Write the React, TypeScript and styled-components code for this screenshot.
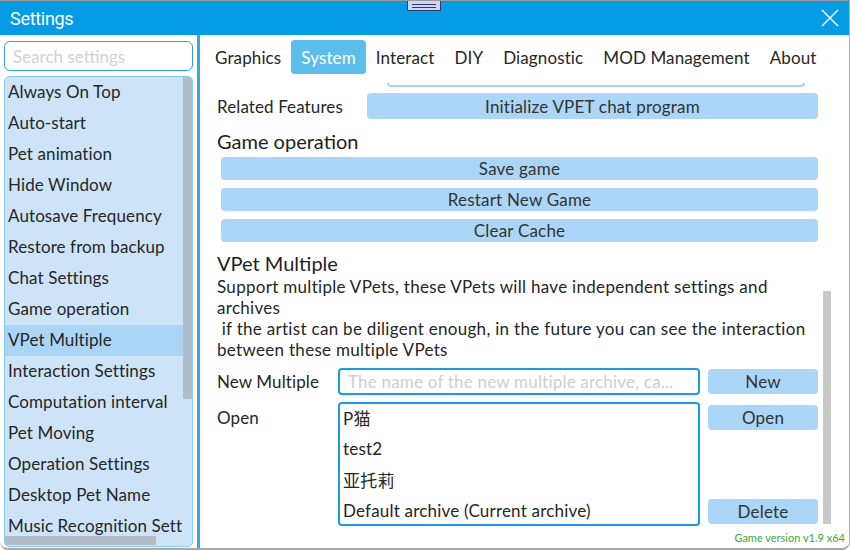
import React from 'react';
import styled, { createGlobalStyle } from 'styled-components';

const GlobalStyle = createGlobalStyle`
  html, body {
    margin: 0;
    padding: 0;
    background: #ffffff;
  }
  body {
    font-family: Lato, "Noto Sans CJK SC", sans-serif;
    color: #222;
  }
`;

const sideItems = [
  'Always On Top',
  'Auto-start',
  'Pet animation',
  'Hide Window',
  'Autosave Frequency',
  'Restore from backup',
  'Chat Settings',
  'Game operation',
  'VPet Multiple',
  'Interaction Settings',
  'Computation interval',
  'Pet Moving',
  'Operation Settings',
  'Desktop Pet Name',
  'Music Recognition Settings',
];

const tabs = ['Graphics', 'System', 'Interact', 'DIY', 'Diagnostic', 'MOD Management', 'About'];

const archives = ['P猫', 'test2', '亚托莉', 'Default archive (Current archive)'];

const Window = styled.div`
  position: relative;
  width: 850px;
  height: 550px;
  box-sizing: border-box;
  display: flex;
  flex-direction: column;
  background: #fff;
  border-top: 1px solid #9a9a9a;
  border-right: 1px solid #b0b0b0;
  border-bottom: 2px solid #a8a8a8;
  border-radius: 0 0 8px 8px;
  overflow: hidden;
`;

const TitleBar = styled.div`
  height: 34px;
  flex: none;
  display: flex;
  align-items: center;
  justify-content: space-between;
  padding: 0 10px;
  background: #059ce5;
  color: #fff;
`;

const Title = styled.span`
  font-family: Roboto, sans-serif;
  font-size: 18px;
  letter-spacing: -0.3px;
`;

const DragHandle = styled.div`
  position: absolute;
  top: -1px;
  left: 407px;
  width: 34px;
  height: 11px;
  box-sizing: border-box;
  background: #ccd5f2;
  border: 1px solid #2d3b6e;
  display: flex;
  flex-direction: column;
  align-items: center;
  justify-content: center;
  gap: 2px;
  &::before,
  &::after {
    content: '';
    width: 24px;
    height: 1px;
    background: #2d3b6e;
  }
`;

const Body = styled.div`
  flex: 1;
  display: flex;
  min-height: 0;
`;

const Sidebar = styled.div`
  width: 197px;
  flex: none;
  box-sizing: border-box;
  padding: 6px 4px 1px 4px;
  display: flex;
  flex-direction: column;
  gap: 5px;
`;

const Search = styled.div`
  height: 30px;
  flex: none;
  box-sizing: border-box;
  border: 1px solid #2fa0e2;
  border-radius: 6px;
  padding: 0 8px;
  display: flex;
  align-items: center;
  font-size: 17px;
  color: #d2d2d2;
`;

const ListBox = styled.div`
  flex: 1;
  min-height: 0;
  box-sizing: border-box;
  border: 1px solid #86cbf1;
  border-radius: 5px;
  background: #cde4f8;
  display: grid;
  grid-template-columns: 1fr 9px;
  grid-template-rows: 1fr 10px;
  overflow: hidden;
`;

const ListItems = styled.div`
  overflow: hidden;
  display: flex;
  flex-direction: column;
`;

const SideItem = styled.div<{ $active?: boolean }>`
  height: 31px;
  flex: none;
  display: flex;
  align-items: center;
  padding: 0 0 2px 3px;
  box-sizing: border-box;
  font-size: 17px;
  letter-spacing: 0.1px;
  white-space: nowrap;
  color: #262626;
  background: ${(p) => (p.$active ? '#aad5f6' : 'transparent')};
`;

const VTrack = styled.div`
  display: flex;
  flex-direction: column;
`;

const VThumb = styled.div`
  height: 322px;
  background: #b3bdc7;
`;

const HTrack = styled.div`
  grid-column: 1 / 3;
  display: flex;
  align-items: flex-start;
`;

const HThumb = styled.div`
  width: 151px;
  height: 9px;
  background: #b3bdc7;
`;

const Divider = styled.div`
  width: 3px;
  flex: none;
  background: #3ea6df;
`;

const Main = styled.div`
  flex: 1;
  display: flex;
  flex-direction: column;
  min-width: 0;
`;

const TabRow = styled.div`
  display: flex;
  padding: 5px 0 0 5px;
  height: 34px;
  flex: none;
`;

const Tab = styled.div<{ $active?: boolean }>`
  padding: 0 10px;
  display: flex;
  align-items: center;
  font-size: 17px;
  letter-spacing: 0.12px;
  border-radius: 4px;
  color: ${(p) => (p.$active ? '#fff' : '#262626')};
  background: ${(p) => (p.$active ? '#5cbeec' : 'transparent')};
`;

const ContentRow = styled.div`
  flex: 1;
  display: flex;
  min-height: 0;
`;

const Content = styled.div`
  width: 601px;
  margin-left: 17px;
  display: flex;
  flex-direction: column;
  overflow: hidden;
`;

const PartialCard = styled.div`
  height: 4px;
  flex: none;
  margin: 9px 13px 0 170px;
  box-sizing: border-box;
  border: 2px solid #a9d4f5;
  border-top: none;
  border-radius: 0 0 6px 6px;
`;

const Row = styled.div<{ $top: number; $align?: string }>`
  display: flex;
  align-items: ${(p) => p.$align || 'center'};
  margin-top: ${(p) => p.$top}px;
  flex: none;
`;

const Label = styled.div<{ $width: number; $line?: number }>`
  width: ${(p) => p.$width}px;
  flex: none;
  font-size: 17px;
  letter-spacing: 0.1px;
  line-height: ${(p) => (p.$line ? `${p.$line}px` : 'normal')};
  color: #262626;
`;

const ActionButton = styled.div<{ $height?: number; $fill?: boolean }>`
  height: ${(p) => p.$height || 23}px;
  flex: ${(p) => (p.$fill ? '1' : 'none')};
  display: flex;
  align-items: center;
  justify-content: center;
  border-radius: 4px;
  background: #acd6f7;
  color: #333;
  font-size: 17px;
  letter-spacing: 0.2px;
`;

const Heading = styled.div<{ $top: number }>`
  margin-top: ${(p) => p.$top}px;
  font-size: 20px;
  line-height: 24px;
  color: #1e1e1e;
  flex: none;
`;

const ButtonStack = styled.div`
  display: flex;
  flex-direction: column;
  gap: 8px;
  margin-top: 4px;
  margin-left: 4px;
`;

const Paragraph = styled.div`
  width: 601px;
  font-size: 17px;
  letter-spacing: 0.3px;
  line-height: 21px;
  white-space: pre-wrap;
  color: #262626;
  margin-top: 1px;
  flex: none;
`;

const TextInput = styled.div`
  width: 362px;
  height: 27px;
  flex: none;
  box-sizing: border-box;
  border: 2px solid #1b9be3;
  border-radius: 4px;
  padding: 0 8px;
  display: flex;
  align-items: center;
  font-size: 17px;
  letter-spacing: 0.2px;
  color: #cfcfcf;
  white-space: nowrap;
`;

const SideButtons = styled.div`
  width: 110px;
  margin-left: 8px;
  flex: none;
  display: flex;
  flex-direction: column;
  justify-content: space-between;
  align-self: stretch;
  padding: 3px 0 2px;
`;

const ArchiveList = styled.div`
  width: 362px;
  height: 124px;
  flex: none;
  box-sizing: border-box;
  border: 2px solid #1b9be3;
  border-radius: 4px;
  display: flex;
  flex-direction: column;
`;

const ArchiveItem = styled.div`
  height: 31px;
  flex: none;
  box-sizing: border-box;
  display: flex;
  align-items: center;
  padding: 0 0 4px 3px;
  font-size: 17px;
  letter-spacing: 0.2px;
  color: #262626;
`;

const ScrollTrack = styled.div`
  width: 8px;
  margin-left: 5px;
  flex: none;
  display: flex;
  flex-direction: column;
`;

const ScrollThumb = styled.div`
  margin-top: 217px;
  height: 233px;
  background: #c8c8c8;
`;

const Footer = styled.div`
  height: 17px;
  flex: none;
  display: flex;
  justify-content: flex-end;
  align-items: flex-start;
  padding-right: 4px;
  font-size: 11px;
  color: #3aa83a;
`;

const CloseIcon = () => (
  <svg width="18" height="18" viewBox="0 0 18 18" fill="none" stroke="#fff" strokeWidth="1.4">
    <path d="M1 1 L17 17 M17 1 L1 17" />
  </svg>
);

export default function App() {
  return (
    <>
      <GlobalStyle />
      <Window>
        <TitleBar>
          <Title>Settings</Title>
          <CloseIcon />
        </TitleBar>
        <DragHandle />
        <Body>
          <Sidebar>
            <Search>Search settings</Search>
            <ListBox>
              <ListItems>
                {sideItems.map((item) => (
                  <SideItem key={item} $active={item === 'VPet Multiple'}>
                    {item}
                  </SideItem>
                ))}
              </ListItems>
              <VTrack>
                <VThumb />
              </VTrack>
              <HTrack>
                <HThumb />
              </HTrack>
            </ListBox>
          </Sidebar>
          <Divider />
          <Main>
            <TabRow>
              {tabs.map((t) => (
                <Tab key={t} $active={t === 'System'}>
                  {t}
                </Tab>
              ))}
            </TabRow>
            <ContentRow>
              <Content>
                <PartialCard />
                <Row $top={6}>
                  <Label $width={150}>Related Features</Label>
                  <ActionButton $height={26} $fill>
                    Initialize VPET chat program
                  </ActionButton>
                </Row>
                <Heading $top={10}>Game operation</Heading>
                <ButtonStack>
                  <ActionButton>Save game</ActionButton>
                  <ActionButton>Restart New Game</ActionButton>
                  <ActionButton>Clear Cache</ActionButton>
                </ButtonStack>
                <Heading $top={9}>VPet Multiple</Heading>
                <Paragraph>
                  {'Support multiple VPets, these VPets will have independent settings and archives\n if the artist can be diligent enough, in the future you can see the interaction between these multiple VPets'}
                </Paragraph>
                <Row $top={6}>
                  <Label $width={121}>New Multiple</Label>
                  <TextInput>The name of the new multiple archive, ca...</TextInput>
                  <SideButtons>
                    <ActionButton $height={25}>New</ActionButton>
                  </SideButtons>
                </Row>
                <Row $top={6} $align="flex-start">
                  <Label $width={121} $line={31}>
                    Open
                  </Label>
                  <ArchiveList>
                    {archives.map((a) => (
                      <ArchiveItem key={a}>{a}</ArchiveItem>
                    ))}
                  </ArchiveList>
                  <SideButtons>
                    <ActionButton $height={25}>Open</ActionButton>
                    <ActionButton $height={25}>Delete</ActionButton>
                  </SideButtons>
                </Row>
              </Content>
              <ScrollTrack>
                <ScrollThumb />
              </ScrollTrack>
            </ContentRow>
            <Footer>Game version v1.9 x64</Footer>
          </Main>
        </Body>
      </Window>
    </>
  );
}
